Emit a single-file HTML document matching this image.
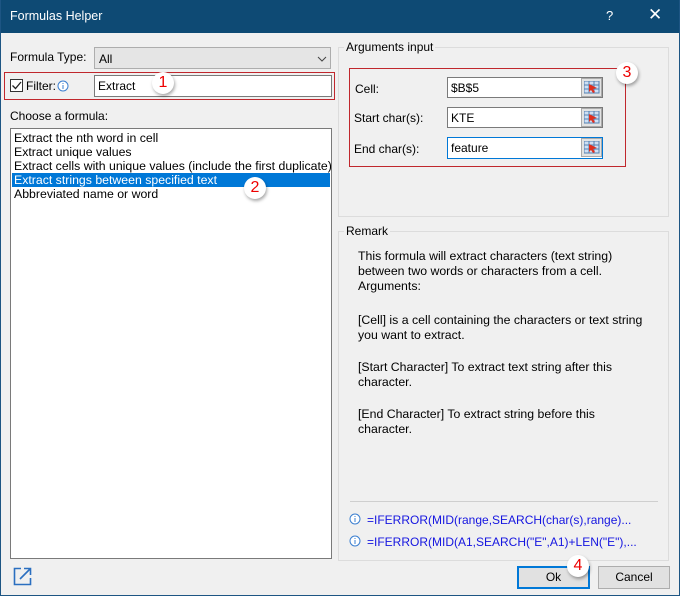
<!DOCTYPE html>
<html><head><style>
*{margin:0;padding:0;box-sizing:border-box}
body{width:680px;height:596px;background:#f0f0f0;font-family:"Liberation Sans",sans-serif;font-size:12px;color:#000;position:relative;overflow:hidden}
.a{position:absolute;white-space:nowrap}
.win{position:absolute;left:0;top:0;width:680px;height:596px;border:1px solid #1d5583;border-top:none}
.title{position:absolute;left:0;top:0;width:680px;height:33px;background:#0e4a74;color:#fff;font-size:12.5px}
.inp{position:absolute;background:#fff;border:1px solid #7a7a7a}
.badge{position:absolute;width:22px;height:22px;border-radius:50%;background:#fff;color:#e00;font-size:16px;text-align:center;line-height:22px;box-shadow:1px 2px 3px rgba(0,0,0,.35)}
.grp{position:absolute;border:1px solid #dcdcdc}
.ico{position:absolute;width:21px;height:19px;background:#e3e3e3;border:1px solid #aaa}
.btn{position:absolute;height:23px;background:#e1e1e1;border:1px solid #adadad;text-align:center;line-height:21px}
.li{position:absolute;left:3px;height:14px;line-height:14px;font-size:12.3px;white-space:nowrap}
.bl{color:#1515e0}
.rm{position:absolute;left:358px;line-height:15px;white-space:nowrap;font-size:12.3px}
</style></head><body>
<div class="title"><span class="a" style="left:10px;top:9px">Formulas Helper</span><span class="a" style="left:606px;top:8px;font-size:13px">?</span><span class="a" style="left:648px;top:5px;font-size:17px">✕</span></div>
<div class="win"></div>

<span class="a" style="left:10px;top:50px">Formula Type:</span>
<div class="a" style="left:94px;top:47px;width:237px;height:22px;background:#e5e5e5;border:1px solid #adadad"><span class="a" style="left:4px;top:4px">All</span><svg class="a" style="left:222px;top:8px" width="10" height="6"><path d="M1 1L5 5L9 1" stroke="#444" fill="none"/></svg></div>

<div class="a" style="left:4px;top:72px;width:331px;height:28px;border:1px solid #c0272d"></div>
<div class="a" style="left:10px;top:79px;width:13px;height:13px;background:#fff;border:1px solid #333"></div>
<svg class="a" style="left:11px;top:80px" width="11" height="11"><path d="M1.5 5.5L4.5 8.5L10 2" stroke="#222" stroke-width="1.3" fill="none"/></svg>
<span class="a" style="left:26px;top:79px">Filter:</span>
<svg class="a" style="left:57px;top:80px" width="12" height="12"><circle cx="6" cy="6" r="5" stroke="#3b7fd0" fill="#fff"/><path d="M6 5v4M6 3v1" stroke="#3b7fd0"/></svg>
<div class="inp" style="left:94px;top:75px;width:238px;height:22px"><span class="a" style="left:3px;top:3px">Extract</span></div>
<div class="badge" style="left:152px;top:72px">1</div>

<span class="a" style="left:10px;top:109px">Choose a formula:</span>
<div class="inp" style="left:10px;top:128px;width:322px;height:431px;overflow:hidden">
<div class="li" style="top:2px">Extract the nth word in cell</div>
<div class="li" style="top:16px">Extract unique values</div>
<div class="li" style="top:30px">Extract cells with unique values (include the first duplicate)</div>
<div style="position:absolute;left:1px;top:44px;width:318px;height:14px;background:#0078d7"></div>
<div class="li" style="top:44px;color:#fff">Extract strings between specified text</div>
<div class="li" style="top:58px">Abbreviated name or word</div>
</div>
<div class="badge" style="left:244px;top:177px">2</div>

<div class="grp" style="left:338px;top:47px;width:331px;height:170px"></div>
<span class="a" style="left:344px;top:40px;background:#f0f0f0;padding:0 2px">Arguments input</span>
<div class="a" style="left:349px;top:68px;width:277px;height:99px;border:1px solid #c0272d"></div>
<span class="a" style="left:355px;top:82px">Cell:</span>
<span class="a" style="left:354px;top:111px">Start char(s):</span>
<span class="a" style="left:354px;top:142px">End char(s):</span>
<div class="inp" style="left:447px;top:77px;width:156px;height:21px"><span class="a" style="left:3px;top:3px">$B$5</span></div>
<div class="inp" style="left:447px;top:107px;width:156px;height:21px"><span class="a" style="left:3px;top:3px">KTE</span></div>
<div class="inp" style="left:447px;top:137px;width:156px;height:22px;border-color:#0078d7"><span class="a" style="left:3px;top:3px">feature</span></div>
<div class="ico" style="left:581px;top:78px"></div><div class="ico" style="left:581px;top:108px"></div><div class="ico" style="left:581px;top:138px"></div>
<svg class="a" style="left:584px;top:81px" width="16" height="13"><rect x="0" y="0" width="15" height="12" fill="#cfe0f5" stroke="#5580b0"/><path d="M0 4h15M0 8h15M5 0v12M10 0v12" stroke="#5580b0"/><path d="M5 3l8 4-4 1 2 3-2 1-2-3-2 2z" fill="#e03020"/></svg>
<svg class="a" style="left:584px;top:111px" width="16" height="13"><rect x="0" y="0" width="15" height="12" fill="#cfe0f5" stroke="#5580b0"/><path d="M0 4h15M0 8h15M5 0v12M10 0v12" stroke="#5580b0"/><path d="M5 3l8 4-4 1 2 3-2 1-2-3-2 2z" fill="#e03020"/></svg>
<svg class="a" style="left:584px;top:141px" width="16" height="13"><rect x="0" y="0" width="15" height="12" fill="#cfe0f5" stroke="#5580b0"/><path d="M0 4h15M0 8h15M5 0v12M10 0v12" stroke="#5580b0"/><path d="M5 3l8 4-4 1 2 3-2 1-2-3-2 2z" fill="#e03020"/></svg>
<div class="badge" style="left:616px;top:62px">3</div>

<div class="grp" style="left:338px;top:231px;width:331px;height:330px"></div>
<span class="a" style="left:344px;top:224px;background:#f0f0f0;padding:0 2px">Remark</span>
<div class="rm" style="top:249px">This formula will extract characters (text string)<br>between two words or characters from a cell.<br>Arguments:</div>
<div class="rm" style="top:313px">[Cell] is a cell containing the characters or text string<br>you want to extract.</div>
<div class="rm" style="top:360px">[Start Character] To extract text string after this<br>character.</div>
<div class="rm" style="top:407px">[End Character] To extract string before this<br>character.</div>
<div class="a" style="left:350px;top:501px;width:308px;height:1px;background:#cfcfcf"></div>
<svg class="a" style="left:349px;top:513px" width="12" height="12"><circle cx="6" cy="6" r="5" stroke="#3b7fd0" fill="#fff"/><path d="M6 5v4M6 3v1" stroke="#3b7fd0"/></svg>
<svg class="a" style="left:349px;top:535px" width="12" height="12"><circle cx="6" cy="6" r="5" stroke="#3b7fd0" fill="#fff"/><path d="M6 5v4M6 3v1" stroke="#3b7fd0"/></svg>
<span class="a bl" style="left:367px;top:513px">=IFERROR(MID(range,SEARCH(char(s),range)...</span>
<span class="a bl" style="left:367px;top:535px">=IFERROR(MID(A1,SEARCH("E",A1)+LEN("E"),...</span>

<svg class="a" style="left:13px;top:567px" width="19" height="19"><path d="M8 1.5H1.5v16h16V11" stroke="#2b6fc0" stroke-width="1.6" fill="none"/><path d="M7 12L17 2M11 1.5h6.5V8" stroke="#2b6fc0" stroke-width="1.6" fill="none"/></svg>
<div class="btn" style="left:517px;top:566px;width:73px;border:2px solid #0078d7;line-height:19px">Ok</div>
<div class="btn" style="left:598px;top:566px;width:72px">Cancel</div>
<div class="badge" style="left:567px;top:555px">4</div>
</body></html>
